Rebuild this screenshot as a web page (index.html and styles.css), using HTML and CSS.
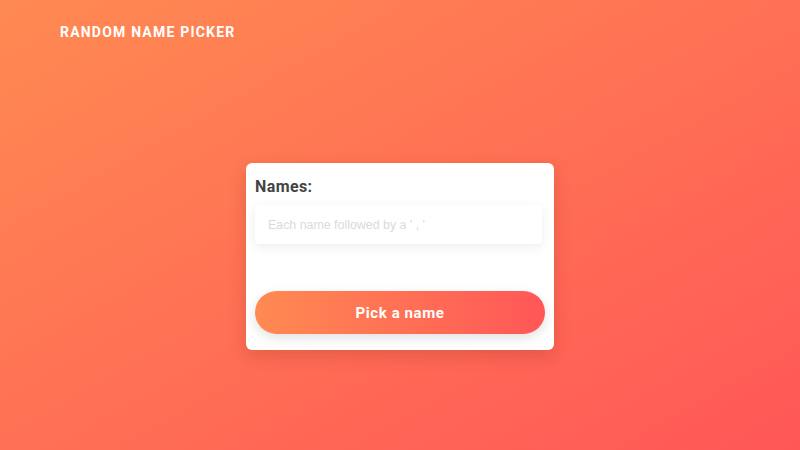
FILE: index.html
```html
<!DOCTYPE html>
<html lang="en">
<head>
    <meta charset="UTF-8">
    <meta name="viewport" content="width=device-width, initial-scale=1.0">
    <title>Random Name Picker</title>
    <link rel="stylesheet" href="styles.css">
</head>
<body>

<header class="top-bar">
    <h1 class="logo">RANDOM NAME PICKER</h1>
</header>

<main class="stage">
    <div class="card">
        <label class="card-label" for="names">Names:</label>
        <input type="text" id="names" class="names-input" placeholder="Each name followed by a ' , '">
        <button class="pick-btn">Pick a name</button>
    </div>
</main>

</body>
</html>
```

FILE: styles.css
```css
body, html {
    margin: 0;
    padding: 0;
    height: 100%;
}
body {
    display: flex;
    flex-direction: column;
    font-family: Roboto, "Liberation Sans", sans-serif;
    background: linear-gradient(to bottom right, #ff8a52, #ff5757);
}
.top-bar {
    height: 63px;
    padding-left: 60px;
    display: flex;
    align-items: center;
}
.logo {
    margin: 0;
    color: #fff;
    font-size: 14px;
    font-weight: 700;
    letter-spacing: 1.2px;
}
.stage {
    flex: 1;
    display: flex;
    align-items: center;
    justify-content: center;
}
.card {
    width: 308px;
    box-sizing: border-box;
    padding: 14px 9px 16px 9px;
    background: #fff;
    border-radius: 6px;
    box-shadow: 0 6px 18px rgba(120, 30, 20, 0.2);
    display: flex;
    flex-direction: column;
}
.card-label {
    color: #444;
    font-size: 16px;
    font-weight: 700;
    letter-spacing: 0.4px;
    line-height: 19px;
    margin-bottom: 9px;
}
.names-input {
    width: 287px;
    height: 39px;
    box-sizing: border-box;
    border: none;
    outline: none;
    border-radius: 4px;
    padding: 0 13px;
    font-family: "Liberation Sans", Arial, sans-serif;
    font-size: 12.4px;
    color: #555;
    box-shadow: 0 3px 12px rgba(0, 0, 0, 0.07);
}
.names-input::placeholder {
    color: #dadada;
}
.pick-btn {
    margin-top: 47px;
    height: 43px;
    border: none;
    border-radius: 22px;
    background: linear-gradient(to right, #ff8a52, #ff5757);
    color: #fff;
    font-family: Roboto, "Liberation Sans", sans-serif;
    font-size: 15px;
    font-weight: 700;
    letter-spacing: 0.6px;
    box-shadow: 0 4px 12px rgba(0, 0, 0, 0.12);
    cursor: pointer;
}
```
